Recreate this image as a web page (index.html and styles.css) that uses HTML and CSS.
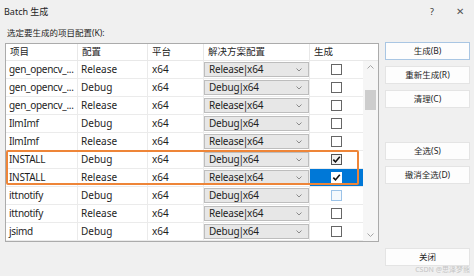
FILE: index.html
```html
<!DOCTYPE html>
<html lang="zh-CN">
<head>
    <meta charset="UTF-8">
    <title>Batch 生成</title>
    <link rel="stylesheet" href="styles.css">
</head>
<body>
    <div class="dialog">
        <!-- 标题栏 -->
        <div class="titlebar">
            <span class="title">Batch 生成</span>
            <span class="help">?</span>
            <span class="close">&#x2715;</span>
        </div>
        <div class="caption">选定要生成的项目配置(K):</div>

        <div class="main">
            <!-- 项目列表 -->
            <div class="grid">
                <div class="head">
                    <div class="hcell">项目</div>
                    <div class="hcell">配置</div>
                    <div class="hcell">平台</div>
                    <div class="hcell">解决方案配置</div>
                    <div class="hcell">生成</div>
                    <div class="hcell last"></div>
                </div>
                <div class="body">
                    <div class="rows">
                        <div class="row">
                            <div class="cell name">gen_opencv_...</div><div class="cell">Release</div><div class="cell pf">x64</div>
                            <div class="cell cb"><div class="combo">Release<span class="bar">|</span>x64<svg width="6" height="4" viewBox="0 0 6 4"><path d="M0.5 0.5 L3 3 L5.5 0.5" fill="none" stroke="#8a8a8a" stroke-width="1"/></svg></div></div>
                            <div class="cell ck"><span class="box"></span></div>
                        </div>
                        <div class="row">
                            <div class="cell name">gen_opencv_...</div><div class="cell">Debug</div><div class="cell pf">x64</div>
                            <div class="cell cb"><div class="combo">Debug<span class="bar">|</span>x64<svg width="6" height="4" viewBox="0 0 6 4"><path d="M0.5 0.5 L3 3 L5.5 0.5" fill="none" stroke="#8a8a8a" stroke-width="1"/></svg></div></div>
                            <div class="cell ck"><span class="box"></span></div>
                        </div>
                        <div class="row">
                            <div class="cell name">gen_opencv_...</div><div class="cell">Release</div><div class="cell pf">x64</div>
                            <div class="cell cb"><div class="combo">Release<span class="bar">|</span>x64<svg width="6" height="4" viewBox="0 0 6 4"><path d="M0.5 0.5 L3 3 L5.5 0.5" fill="none" stroke="#8a8a8a" stroke-width="1"/></svg></div></div>
                            <div class="cell ck"><span class="box"></span></div>
                        </div>
                        <div class="row">
                            <div class="cell name">IlmImf</div><div class="cell">Debug</div><div class="cell pf">x64</div>
                            <div class="cell cb"><div class="combo">Debug<span class="bar">|</span>x64<svg width="6" height="4" viewBox="0 0 6 4"><path d="M0.5 0.5 L3 3 L5.5 0.5" fill="none" stroke="#8a8a8a" stroke-width="1"/></svg></div></div>
                            <div class="cell ck"><span class="box"></span></div>
                        </div>
                        <div class="row">
                            <div class="cell name">IlmImf</div><div class="cell">Release</div><div class="cell pf">x64</div>
                            <div class="cell cb"><div class="combo">Release<span class="bar">|</span>x64<svg width="6" height="4" viewBox="0 0 6 4"><path d="M0.5 0.5 L3 3 L5.5 0.5" fill="none" stroke="#8a8a8a" stroke-width="1"/></svg></div></div>
                            <div class="cell ck"><span class="box"></span></div>
                        </div>
                        <div class="row">
                            <div class="cell name">INSTALL</div><div class="cell">Debug</div><div class="cell pf">x64</div>
                            <div class="cell cb"><div class="combo">Debug<span class="bar">|</span>x64<svg width="6" height="4" viewBox="0 0 6 4"><path d="M0.5 0.5 L3 3 L5.5 0.5" fill="none" stroke="#8a8a8a" stroke-width="1"/></svg></div></div>
                            <div class="cell ck"><span class="box checked"><svg width="9" height="9" viewBox="0 0 9 9"><path d="M1.3 4.6 L3.5 6.9 L7.8 1.8" fill="none" stroke="#111" stroke-width="1.6"/></svg></span></div>
                        </div>
                        <div class="row">
                            <div class="cell name">INSTALL</div><div class="cell">Release</div><div class="cell pf">x64</div>
                            <div class="cell cb"><div class="combo">Release<span class="bar">|</span>x64<svg width="6" height="4" viewBox="0 0 6 4"><path d="M0.5 0.5 L3 3 L5.5 0.5" fill="none" stroke="#8a8a8a" stroke-width="1"/></svg></div></div>
                            <div class="cell ck sel"><span class="box on"><svg width="9" height="9" viewBox="0 0 9 9"><path d="M1.3 4.6 L3.5 6.9 L7.8 1.8" fill="none" stroke="#111" stroke-width="1.6"/></svg></span></div>
                        </div>
                        <div class="row">
                            <div class="cell name">ittnotify</div><div class="cell">Debug</div><div class="cell pf">x64</div>
                            <div class="cell cb"><div class="combo">Debug<span class="bar">|</span>x64<svg width="6" height="4" viewBox="0 0 6 4"><path d="M0.5 0.5 L3 3 L5.5 0.5" fill="none" stroke="#8a8a8a" stroke-width="1"/></svg></div></div>
                            <div class="cell ck"><span class="box hover"></span></div>
                        </div>
                        <div class="row">
                            <div class="cell name">ittnotify</div><div class="cell">Release</div><div class="cell pf">x64</div>
                            <div class="cell cb"><div class="combo">Release<span class="bar">|</span>x64<svg width="6" height="4" viewBox="0 0 6 4"><path d="M0.5 0.5 L3 3 L5.5 0.5" fill="none" stroke="#8a8a8a" stroke-width="1"/></svg></div></div>
                            <div class="cell ck"><span class="box"></span></div>
                        </div>
                        <div class="row">
                            <div class="cell name">jsimd</div><div class="cell">Debug</div><div class="cell pf">x64</div>
                            <div class="cell cb"><div class="combo">Debug<span class="bar">|</span>x64<svg width="6" height="4" viewBox="0 0 6 4"><path d="M0.5 0.5 L3 3 L5.5 0.5" fill="none" stroke="#8a8a8a" stroke-width="1"/></svg></div></div>
                            <div class="cell ck"><span class="box"></span></div>
                        </div>
                    </div>
                    <!-- 滚动条 -->
                    <div class="scroll">
                        <div class="arrow"><svg width="7" height="4" viewBox="0 0 7 4"><path d="M0.5 3.5 L3.5 0.5 L6.5 3.5" fill="none" stroke="#a6a6a6" stroke-width="1"/></svg></div>
                        <div class="thumb"></div>
                        <div class="arrow down"><svg width="7" height="4" viewBox="0 0 7 4"><path d="M0.5 0.5 L3.5 3.5 L6.5 0.5" fill="none" stroke="#a6a6a6" stroke-width="1"/></svg></div>
                    </div>
                </div>
                <!-- 标注框 -->
                <div class="mark"></div>
            </div>

            <!-- 按钮 -->
            <div class="buttons">
                <div class="btn default">生成(B)</div>
                <div class="btn">重新生成(R)</div>
                <div class="btn">清理(C)</div>
                <div class="btn group">全选(S)</div>
                <div class="btn">撤消全选(D)</div>
                <div class="btn bottom">关闭</div>
            </div>
        </div>
        <div class="watermark">CSDN @思泽梦熊</div>
    </div>
</body>
</html>
```

FILE: styles.css
```css
body {
    margin: 0;
    background-color: #f0f0f0;
    font-family: "Noto Sans", "Noto Sans CJK SC", sans-serif;
    color: #1e1e1e;
}

.dialog {
    width: 474px;
    height: 276px;
    position: relative;
    overflow: hidden;
}

/* 标题栏 */
.titlebar {
    height: 22px;
    display: flex;
    align-items: center;
    padding-left: 4px;
    font-size: 9px;
}
.title {
    flex: 1;
}
.help,
.close {
    width: 28px;
    text-align: center;
    color: #333;
}
.help {
    font-size: 9px;
}
.close {
    font-size: 10px;
    color: #555;
}

.caption {
    height: 21px;
    line-height: 21px;
    padding-left: 7px;
    font-size: 8.5px;
}

.main {
    display: flex;
    padding-left: 5px;
    gap: 6px;
}

/* 项目列表 */
.grid {
    position: relative;
    width: 374px;
    height: 199px;
    box-sizing: border-box;
    border: 1px solid #ababab;
    background-color: #fff;
}
.head {
    display: grid;
    grid-template-columns: 72px 70px 56px 106px 53px 15px;
    height: 17px;
    box-sizing: border-box;
    border-bottom: 1px solid #e8e8e8;
}
.hcell {
    padding-left: 4px;
    font-size: 9.5px;
    line-height: 16px;
    border-right: 1px solid #e8e8e8;
}
.hcell:nth-child(5),
.hcell.last {
    border-right: none;
}
.body {
    display: flex;
    height: 180px;
}
.rows {
    width: 357px;
}
.row {
    display: grid;
    grid-template-columns: 72px 70px 56px 106px 53px;
    height: 18px;
    box-sizing: border-box;
    border-bottom: 1px solid #ebebeb;
}
.cell {
    padding-left: 3px;
    font-size: 10px;
    line-height: 17px;
    white-space: nowrap;
    overflow: hidden;
    border-right: 1px solid #ebebeb;
}
.cell.name {
    letter-spacing: -0.3px;
}
.cell.pf {
    padding-left: 4px;
}
.cell.cb {
    padding-left: 0;
}
.cell.ck {
    display: flex;
    justify-content: center;
    align-items: center;
    padding-left: 0;
    border-right: none;
}
.cell.sel {
    background-color: #0078d7;
}

.combo {
    display: flex;
    align-items: center;
    height: 15px;
    margin-top: 1px;
    padding-left: 4px;
    padding-right: 6px;
    box-sizing: border-box;
    border: 1px solid #bdbdbd;
    background-color: #e7e7e7;
    font-size: 10px;
    letter-spacing: -0.2px;
}
.combo .bar {
    margin: 0 -1px;
}
.combo svg {
    margin-left: auto;
}

.box {
    width: 11px;
    height: 11px;
    box-sizing: border-box;
    border: 1px solid #666;
    background-color: #fff;
    display: flex;
    justify-content: center;
    align-items: center;
}
.box.checked {
    background-color: #f2f2f2;
    border-color: #555;
}
.box.on {
    border-color: #fff;
}
.box.hover {
    border-color: #9cc3e8;
    background-color: #f5f9fd;
}

/* 滚动条 */
.scroll {
    width: 15px;
    display: flex;
    flex-direction: column;
    align-items: center;
    background-color: #f6f6f6;
}
.arrow {
    height: 12px;
    display: flex;
    align-items: center;
}
.arrow.down {
    margin-top: auto;
}
.thumb {
    width: 11px;
    height: 20px;
    margin-top: 17px;
    background-color: #cdcdcd;
}

/* 标注框 */
.mark {
    position: absolute;
    z-index: 2;
    left: 0;
    top: 106px;
    width: 353px;
    height: 35px;
    box-sizing: border-box;
    border: 2px solid #ee8538;
    border-radius: 2px;
}

/* 按钮 */
.buttons {
    display: flex;
    flex-direction: column;
    width: 85px;
    margin-top: -1px;
}
.btn {
    height: 18px;
    margin-bottom: 6px;
    box-sizing: border-box;
    border: 1px solid #e4e4e4;
    background-color: #fdfdfd;
    font-size: 8.5px;
    line-height: 16px;
    text-align: center;
}
.btn.default {
    border-color: #a9c6e3;
}
.btn.group {
    margin-top: 28px;
}
.btn.bottom {
    margin-top: 58px;
}

.watermark {
    position: absolute;
    right: 4px;
    bottom: 2px;
    font-size: 7px;
    color: #c4c4c4;
}
```
